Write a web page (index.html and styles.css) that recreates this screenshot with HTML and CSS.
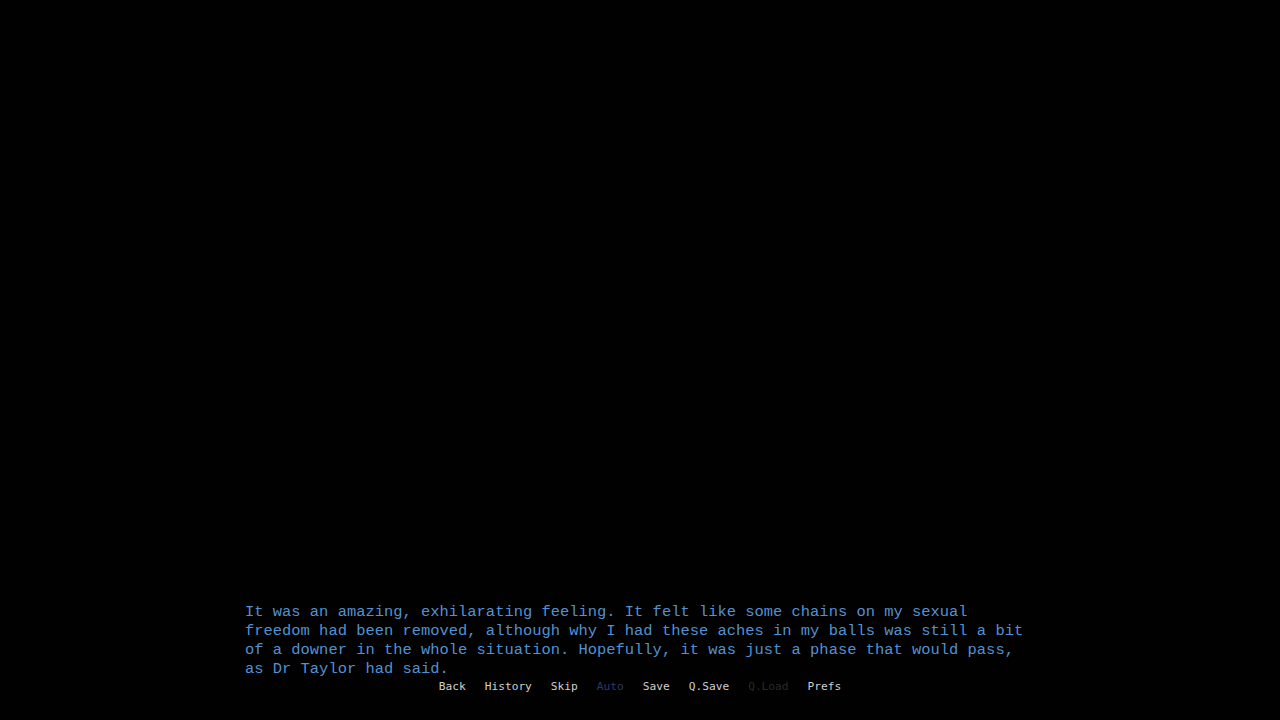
FILE: index.html
```html
<!DOCTYPE html>
<html>
<head>
<meta charset="utf-8">
<link rel="stylesheet" href="styles.css">
</head>
<body>
<div class="screen">
  <div class="textbox">
    <p class="dialogue">It was an amazing, exhilarating feeling. It felt like some chains on my sexual freedom had been removed, although why I had these aches in my balls was still a bit of a downer in the whole situation. Hopefully, it was just a phase that would pass, as Dr Taylor had said.</p>
  </div>
  <nav class="quickmenu">
    <span class="qm">Back</span>
    <span class="qm">History</span>
    <span class="qm">Skip</span>
    <span class="qm qm-on">Auto</span>
    <span class="qm">Save</span>
    <span class="qm">Q.Save</span>
    <span class="qm qm-off">Q.Load</span>
    <span class="qm">Prefs</span>
  </nav>
</div>
</body>
</html>
```
FILE: styles.css
```css
html, body {
  margin: 0;
  padding: 0;
  background: #000;
}
.screen {
  width: 1280px;
  height: 720px;
  display: flex;
  flex-direction: column;
  justify-content: flex-end;
  background: #010101;
  padding-bottom: 25px;
  box-sizing: border-box;
}
.textbox {
  padding-left: 245px;
}
.dialogue {
  margin: 0;
  width: 784px;
  font-family: "Liberation Mono", "DejaVu Sans Mono", monospace;
  font-size: 15.45px;
  line-height: 19px;
  color: #5391d2;
}
.quickmenu {
  display: flex;
  justify-content: center;
  gap: 19px;
  font-family: "DejaVu Sans Mono", "Liberation Mono", monospace;
  font-size: 11.2px;
  line-height: 16px;
  color: #cfcfcf;
}
.qm-on {
  color: #2a3b62;
}
.qm-off {
  color: #2a2a2a;
}
```
